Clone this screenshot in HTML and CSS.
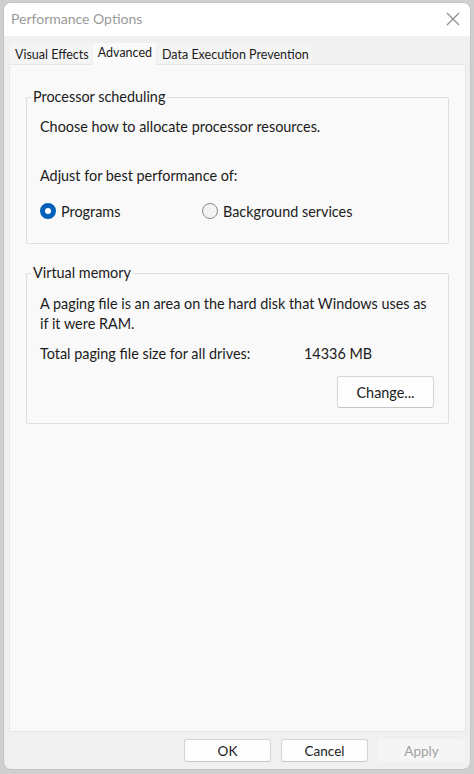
FILE: index.html
```html
<!DOCTYPE html>
<html>
<head>
<meta charset="utf-8">
<link rel="stylesheet" href="styles.css">
</head>
<body>
<div class="window">
  <div class="titlebar">
    <span class="title">Performance Options</span>
    <svg class="close" width="14" height="14" viewBox="0 0 14 14"><path d="M1 1 L13 13 M13 1 L1 13" stroke="#8a8a8a" stroke-width="1.1" fill="none"/></svg>
  </div>
  <div class="tabs">
    <div class="tab">Visual Effects</div>
    <div class="tab active">Advanced</div>
    <div class="tab">Data Execution Prevention</div>
  </div>
  <div class="panel">
    <fieldset class="group g1">
      <legend>Processor scheduling</legend>
      <div class="line">Choose how to allocate processor resources.</div>
      <div class="line adjust">Adjust for best performance of:</div>
      <div class="radios">
        <div class="radio-item r1"><span class="radio checked"></span><span>Programs</span></div>
        <div class="radio-item"><span class="radio"></span><span>Background services</span></div>
      </div>
    </fieldset>
    <fieldset class="group g2">
      <legend>Virtual memory</legend>
      <div class="line">A paging file is an area on the hard disk that Windows uses as</div>
      <div class="line">if it were RAM.</div>
      <div class="line total"><span class="total-label">Total paging file size for all drives:</span><span>14336 MB</span></div>
      <div class="change-row"><button class="btn change">Change...</button></div>
    </fieldset>
  </div>
  <div class="footer">
    <button class="btn foot">OK</button>
    <button class="btn foot">Cancel</button>
    <button class="btn foot disabled">Apply</button>
  </div>
</div>
</body>
</html>
```
FILE: styles.css
```css
html, body {
  margin: 0;
  padding: 0;
  background: #cfcfcf;
}
body {
  font-family: Lato, "Noto Sans", sans-serif;
  font-size: 14.4px;
  color: #1b1b1b;
  width: 474px;
  height: 774px;
  overflow: hidden;
}
.window {
  margin: 2px 3px 0 3px;
  height: 768px;
  box-sizing: border-box;
  border: 1px solid #c4c4c4;
  border-radius: 8px;
  background: #f0f0f0;
  display: flex;
  flex-direction: column;
  overflow: hidden;
}
.titlebar {
  height: 33px;
  background: #ffffff;
  display: flex;
  align-items: center;
  justify-content: space-between;
  padding: 0 10px 2px 7px;
  box-sizing: border-box;
  flex: none;
}
.title {
  color: #9a9a9a;
  font-size: 14px;
}
.tabs {
  display: flex;
  align-items: flex-end;
  padding: 0 0 0 6px;
  margin-top: 7px;
  height: 21px;
  flex: none;
}
.tab {
  height: 20px;
  line-height: 21px;
  padding: 0 3px 0 5px;
  background: #f4f4f4;
  margin-right: 1px;
  font-size: 12.5px;
}
.tab.active {
  height: 22px;
  line-height: 20px;
  background: #fafafa;
  padding: 0 4px 0 5px;
  margin-bottom: -1px;
  position: relative;
  z-index: 1;
}
.panel {
  flex: none;
  height: 668px;
  box-sizing: border-box;
  margin: 0 4px 0 5px;
  background: #f9f9f9;
  border: 1px solid #e6e6e6;
  padding: 22px 16px 0 16px;
}
.group {
  margin: 0;
  border: 1px solid #dedede;
  border-radius: 2px;
  padding: 10px 13px 22px 13px;
}
.group legend {
  padding: 0 2px;
  margin-left: -9px;
  line-height: 20px;
}
.g2 {
  margin-top: 19px;
  padding-top: 11px;
  padding-bottom: 15px;
}
.line {
  line-height: 20px;
  white-space: nowrap;
}
.adjust {
  margin-top: 29px;
}
.radios {
  display: flex;
  margin-top: 15px;
  height: 20px;
  align-items: center;
}
.radio-item {
  display: flex;
  align-items: center;
}
.r1 {
  width: 162px;
}
.radio {
  width: 14px;
  height: 14px;
  border-radius: 50%;
  border: 1px solid #8b8b8b;
  background: #f3f3f3;
  margin-right: 5px;
  box-sizing: content-box;
}
.radio.checked {
  width: 6px;
  height: 6px;
  border: 5px solid #005fb8;
  background: #ffffff;
}
.total {
  margin-top: 10px;
  display: flex;
}
.total-label {
  width: 264px;
}
.change-row {
  display: flex;
  justify-content: flex-end;
  margin-top: 12px;
  padding-right: 1px;
}
.btn {
  font-family: Lato, "Noto Sans", sans-serif;
  font-size: 14.4px;
  color: #1b1b1b;
  background: #fefefe;
  border: 1px solid #d5d5d5;
  border-bottom-color: #c6c6c6;
  border-radius: 3px;
  padding: 0;
}
.change {
  width: 97px;
  height: 32px;
}
.footer {
  display: flex;
  justify-content: flex-end;
  gap: 10px;
  padding: 7px 5px 0 0;
}
.foot {
  width: 87px;
  height: 23px;
  font-size: 13.5px;
}
.disabled {
  background: #f5f5f5;
  border-color: #f5f5f5;
  color: #a0a0a0;
}
```
